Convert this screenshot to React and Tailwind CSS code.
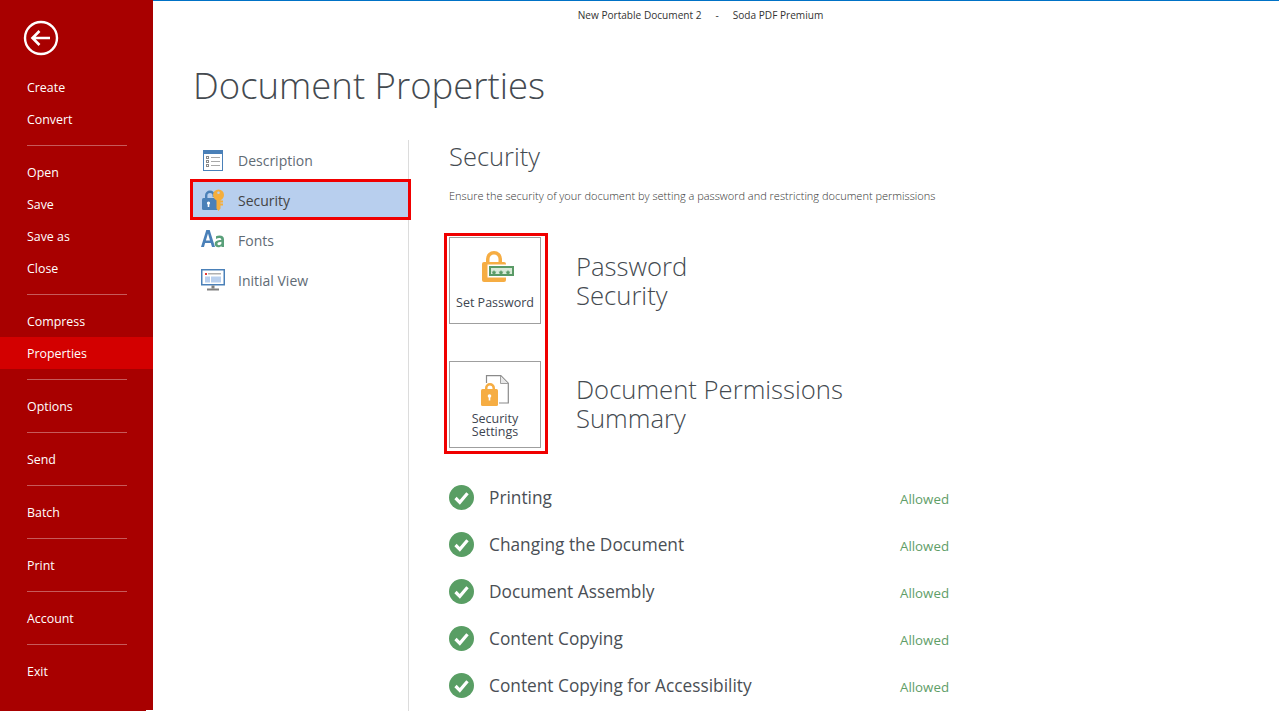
const font = "font-['Open_Sans',_'Noto_Sans',_sans-serif]";

function BackIcon() {
  return (
    <svg width="36" height="36" viewBox="0 0 36 36" fill="none" stroke="white">
      <circle cx="18" cy="18" r="16" strokeWidth="2.4" />
      <path d="M27 18H9.500M16.500 11l-7 7 7 7" strokeWidth="2.6" />
    </svg>
  );
}

function SideItem({ label, active }) {
  return (
    <div className={`h-8 flex items-center pl-[27px] pt-[2px] text-[12.400px] text-white ${active ? "bg-[#d30000]" : ""}`}>
      {label}
    </div>
  );
}

function SideRule() {
  return <div className="h-px w-[100px] ml-[27px] my-2.5 bg-[#c65a5a]" />;
}

function Sidebar() {
  const groups = [
    ["Create", "Convert"],
    ["Open", "Save", "Save as", "Close"],
    ["Compress", "Properties"],
    ["Options"],
    ["Send"],
    ["Batch"],
    ["Print"],
    ["Account"],
    ["Exit"],
  ];
  return (
    <div className="w-[153px] h-full shrink-0 bg-[#a80000] flex flex-col relative">
      <div className="h-[71px] pl-[23px] pt-5">
        <BackIcon />
      </div>
      {groups.map((g, i) => (
        <div key={i}>
          {i > 0 && <SideRule />}
          {g.map((label) => (
            <SideItem key={label} label={label} active={label === "Properties"} />
          ))}
        </div>
      ))}
      <div className="absolute right-0 bottom-0 w-[7px] h-px bg-white" />
    </div>
  );
}

function DescIcon() {
  return (
    <svg width="20" height="21" viewBox="0 0 20 21">
      <rect x="0.500" y="0.500" width="19" height="20" fill="#fff" stroke="#4a80b8" />
      <rect x="0" y="0" width="20" height="4" fill="#4a80b8" />
      <g fill="none" stroke="#8a8a8a">
        <rect x="3.500" y="6.500" width="2" height="2" />
        <rect x="3.500" y="10.500" width="2" height="2" />
        <rect x="3.500" y="14.500" width="2" height="2" />
        <path d="M8 7.500h9M8 11.500h9M8 15.500h9" stroke="#a8a8a8" />
      </g>
    </svg>
  );
}

function SecurityIcon() {
  return (
    <svg width="22" height="23" viewBox="0 0 22 23" className="mt-[2px]">
      <path d="M3 9V6.500a5 5 0 0 1 10 0V8h-2.400V6.500a2.600 2.600 0 0 0-5.200 0V9z" fill="#4a80b8" />
      <rect x="0" y="9" width="16" height="12" rx="1.500" fill="#4a80b8" />
      <circle cx="6.500" cy="14" r="1.600" fill="#fff" />
      <rect x="5.700" y="14" width="1.600" height="4" fill="#fff" />
      <circle cx="16.500" cy="6" r="5.500" fill="#f4ae3d" />
      <circle cx="16.500" cy="3.800" r="1.300" fill="#b8cfee" />
      <path d="M14.500 10h4v1.500h2.500v2h-2.500v1h2.500v2h-2.500v3l-2 2.500-2-2.500z" fill="#f4ae3d" />
    </svg>
  );
}

function FontsIcon() {
  return (
    <svg width="24" height="18" viewBox="0 0 24 18" className="-mt-[3px]">
      <path d="M5.300 0h3.400L14 17h-3l-1.200-4H4.100L3 17H0zM4.900 10.500h4.100L7 3.500z" fill="#4a80b8" />
      <path d="M15 6.300c1-.6 2.200-.9 3.500-.9 3 0 4.500 1.400 4.500 4.200V17h-2.600v-1.300c-.8 1-1.900 1.500-3.100 1.500-2.200 0-3.600-1.300-3.600-3.400 0-2.300 1.700-3.500 5-3.800l1.600-.1c0-1.400-.7-2-2.100-2-1.100 0-2.100.3-3.200 1zm5.400 5.500-1.300.1c-1.800.2-2.700.8-2.700 1.900 0 .9.600 1.400 1.500 1.400 1.100 0 2-.6 2.500-1.600z" fill="#5aa07a" />
    </svg>
  );
}

function ViewIcon() {
  return (
    <svg width="24" height="22" viewBox="0 0 24 22">
      <rect x="0" y="0" width="24" height="16.500" fill="#4a80b8" />
      <rect x="1.500" y="1.500" width="21" height="13.500" fill="#fff" />
      <rect x="4" y="4" width="2" height="2" fill="#e53935" />
      <rect x="7" y="4" width="13" height="1.500" fill="#b0b0b0" />
      <rect x="4" y="7.500" width="5" height="6" fill="#b8cfee" />
      <rect x="10" y="7.500" width="10" height="6" fill="#b8cfee" />
      <rect x="10.500" y="16.500" width="3" height="3" fill="#808080" />
      <rect x="6" y="19.500" width="12" height="2" fill="#808080" />
    </svg>
  );
}

function NavItem({ icon, label, active }) {
  const cls = active
    ? "h-[41px] w-[221px] border-[3px] border-[#f00000] bg-[#b8cfee] -mt-px relative"
    : "h-10 w-[218px]";
  return (
    <div className={`flex items-center ${cls}`}>
      <div className={`w-6 flex justify-center shrink-0 ${active ? "ml-[8px]" : "ml-[11px]"}`}>{icon}</div>
      <span className={`ml-[13px] text-[14px] ${active ? "mt-[2px] text-[#444]" : "text-[#5f6b75]"}`}>{label}</span>
    </div>
  );
}

function Star({ x }) {
  return (
    <path
      transform={`translate(${x} 0)`}
      d="m12 20 .8 1.600 1.700.2-1.200 1.100.3 1.600-1.600-.8-1.600.8.300-1.600-1.200-1.100 1.700-.2z"
    />
  );
}

function PasswordIcon() {
  return (
    <svg width="32" height="33" viewBox="0 0 32 33" className="ml-[5px]">
      <path d="M4 14V9a8 8 0 0 1 16 0v5h-3.500V9a4.500 4.500 0 0 0-9 0v5z" fill="#f6ad43" />
      <rect x="0" y="12" width="24" height="20" rx="2" fill="#f6ad43" />
      <rect x="5.500" y="14.500" width="26.500" height="13" fill="#fff" />
      <rect x="7" y="16" width="25" height="10" fill="#5a9a66" />
      <rect x="9" y="18" width="21" height="6" fill="#d9ead9" />
      <g fill="#5a9a66">
        <Star x={0} />
        <Star x={7} />
        <Star x={14} />
      </g>
    </svg>
  );
}

function SettingsIcon() {
  return (
    <svg width="28" height="32" viewBox="0 0 28 32">
      <path d="M5.500 8V.7h14.300l7.500 7.500V28H18" fill="#fff" stroke="#8a8a8a" strokeWidth="1.200" />
      <path d="M19.500 1v7.500H27" fill="#e8e8e8" stroke="#a0a0a0" />
      <path d="M4 16v-3a5 5 0 0 1 10 0v3h-2.500v-3a2.500 2.500 0 0 0-5 0v3z" fill="#f6ad43" />
      <rect x="0" y="14" width="17" height="17" rx="1.500" fill="#f6ad43" />
      <circle cx="8.500" cy="21" r="1.800" fill="#fff" />
      <rect x="7.700" y="21" width="1.600" height="4.500" fill="#fff" />
    </svg>
  );
}

function ToolButton({ children, icon, top, gap }) {
  return (
    <div className={`w-[92px] h-[87px] border border-[#9f9f9f] flex flex-col items-center ${top}`}>
      {icon}
      <div className={`text-[12.500px] leading-[13px] text-center text-[#3d4550] ${gap}`}>{children}</div>
    </div>
  );
}

function CheckIcon() {
  return (
    <svg width="25" height="25" viewBox="0 0 25 25">
      <circle cx="12.500" cy="12.500" r="12.500" fill="#599e64" />
      <path d="M6.500 13l4.300 4.300L18.500 8.300" fill="none" stroke="#fff" strokeWidth="3.200" />
    </svg>
  );
}

function PermRow({ label }) {
  return (
    <div className="h-[47px] flex items-center">
      <CheckIcon />
      <div className="ml-[15px] w-[411px] text-[17.300px] text-[#4a4f55]">{label}</div>
      <div className="pt-[4px] text-[13.300px] text-[#5f9e68]">Allowed</div>
    </div>
  );
}

export default function App() {
  const perms = [
    "Printing",
    "Changing the Document",
    "Document Assembly",
    "Content Copying",
    "Content Copying for Accessibility",
  ];
  return (
    <div className={`w-[1279px] h-[711px] overflow-hidden flex bg-white ${font}`}>
      <Sidebar />
      <div className="flex-1 min-w-0 flex flex-col">
        <div className="h-[30px] shrink-0 border-t border-[#0072c6] flex justify-center pt-[6px] pr-[31px] text-[10.100px] leading-[16px] text-[#333]">
          <span>New Portable Document 2</span>
          <span className="mx-[14px]">-</span>
          <span>Soda PDF Premium</span>
        </div>
        <h1 className="ml-[40px] mt-[28px] text-[36.500px] leading-[54px] font-light text-[#444a50]">Document Properties</h1>
        <div className="flex flex-1 min-h-0 mt-[28px] ml-[37px]">
          <div className="w-[219px] shrink-0 border-r border-[#dcdcdc]">
            <NavItem icon={<DescIcon />} label="Description" />
            <NavItem icon={<SecurityIcon />} label="Security" active />
            <NavItem icon={<FontsIcon />} label="Fonts" />
            <NavItem icon={<ViewIcon />} label="Initial View" />
          </div>
          <div className="ml-[40px] flex-1 min-w-0">
            <h2 className="-mt-[2px] text-[25.500px] leading-[36px] font-light text-[#444a50]">Security</h2>
            <p className="mt-[14px] text-[11px] leading-[16px] font-light text-[#333]">
              Ensure the security of your document by setting a password and restricting document permissions
            </p>
            <div className="flex mt-[29px] -ml-[5px]">
              <div className="w-[104px] h-[221px] border-[3px] border-[#f00000] pt-px pl-[2px]">
                <ToolButton top="pt-[12px]" gap="mt-[13px]" icon={<PasswordIcon />}>Set Password</ToolButton>
                <div className="h-[37px]" />
                <ToolButton top="pt-[13px]" gap="mt-[5px]" icon={<SettingsIcon />}>Security<br />Settings</ToolButton>
              </div>
              <div className="ml-[28px] pt-[20px] text-[25.650px] leading-[28.500px] font-light text-[#444a50]">
                <div>Password<br />Security</div>
                <div className="mt-[66px]">Document Permissions<br />Summary</div>
              </div>
            </div>
            <div className="mt-[20px]">
              {perms.map((p) => (
                <PermRow key={p} label={p} />
              ))}
            </div>
          </div>
        </div>
      </div>
    </div>
  );
}
